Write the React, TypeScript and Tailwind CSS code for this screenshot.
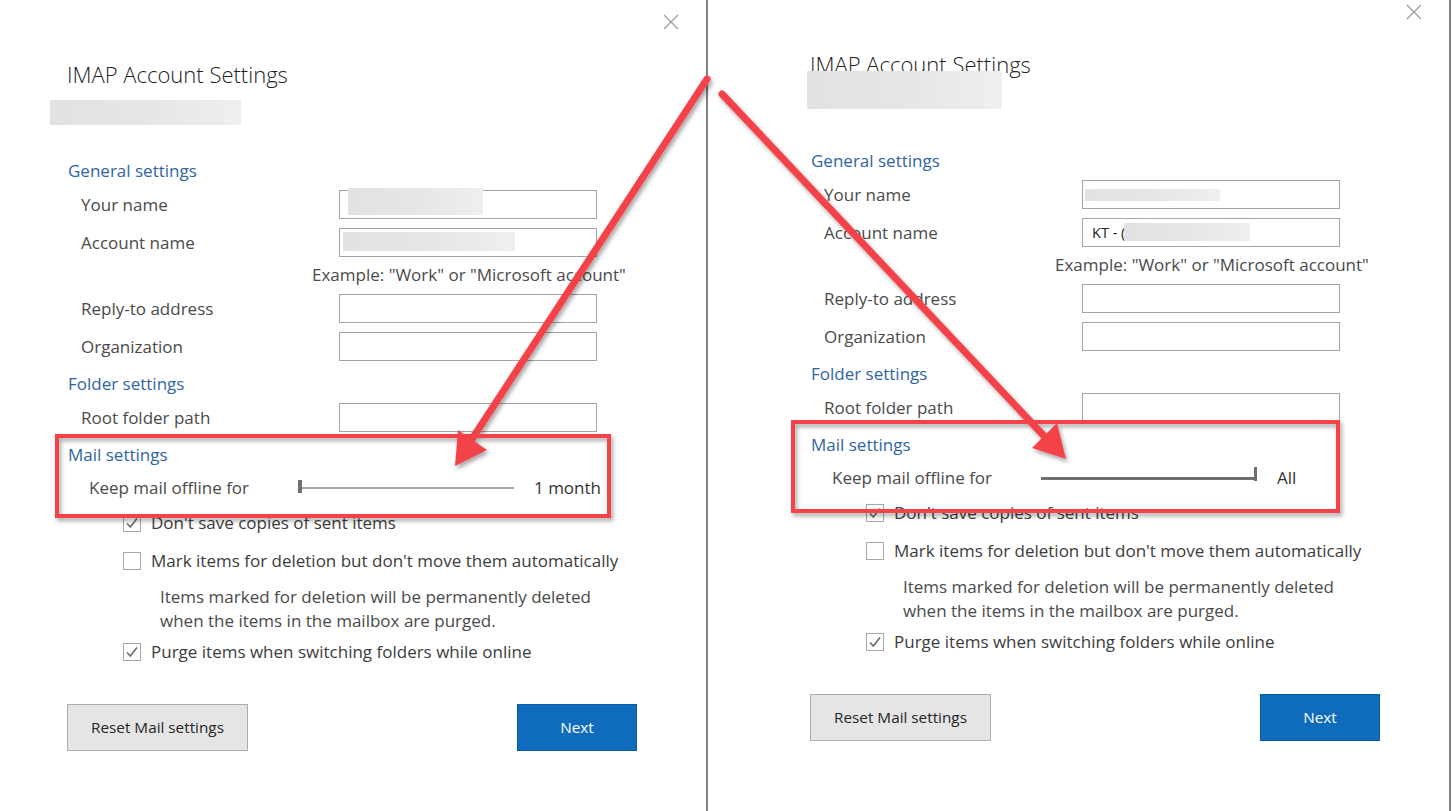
import React from 'react';

type Side = 'left' | 'right';

const Blur = ({ className }: { className: string }) => (
  <div className={`bg-linear-to-r from-[#e2e2e2] via-[#e6e6e6] to-[#efefef] ${className}`} />
);

const Field = ({ label, children }: { label: string; children?: React.ReactNode }) => (
  <div className="flex items-center h-[29px]">
    <span className="w-[339px] pl-[81px] text-[#4a4a4a]">{label}</span>
    <div className="relative w-[258px] h-[29px] border border-[#a5a5a5] bg-white">{children}</div>
  </div>
);

const Check = ({ checked, label }: { checked: boolean; label: string }) => (
  <div className="flex items-center h-[24px] pl-[123px]">
    <div className="w-[18px] h-[18px] border border-[#a8a8a8] bg-white flex items-center justify-center">
      {checked && (
        <svg width="14" height="14" viewBox="0 0 14 14">
          <path d="M2 7.5 L5.3 11 L12 2.5" fill="none" stroke="#6b6b6b" strokeWidth="1.6" />
        </svg>
      )}
    </div>
    <span className="ml-[10px] text-[#3c3c3c]">{label}</span>
  </div>
);

const Dialog = ({ side }: { side: Side }) => {
  const right = side === 'right';
  return (
    <div className={`flex flex-col ${right ? 'pt-[4px]' : 'pt-[14px]'}`}>
      {/* close */}
      <div className="flex justify-end pr-[27px] h-[16px]">
        <svg width="16" height="16" viewBox="0 0 16 16">
          <path d="M1 1 L15 15 M15 1 L1 15" stroke="#9a9a9a" strokeWidth="1.2" />
        </svg>
      </div>

      <div className="mt-[29px] pl-[67px] h-[30px] leading-[30px] text-[22px] font-light text-[#222]">
        IMAP Account Settings
      </div>
      {right ? (
        <Blur className="relative ml-[64px] -mt-[8px] w-[195px] h-[38px]" />
      ) : (
        <Blur className="ml-[50px] mt-[11px] w-[191px] h-[25px]" />
      )}

      <div className={`${right ? 'mt-[40px]' : 'mt-[34px]'} pl-[68px] h-[24px] leading-[24px] text-[#2f64a3]`}>
        General settings
      </div>

      <div className="mt-[7px]">
        <Field label="Your name">
          {right ? (
            <Blur className="absolute left-[2px] top-[8px] w-[135px] h-[12px]" />
          ) : (
            <Blur className="absolute left-[8px] -top-[3px] w-[135px] h-[27px]" />
          )}
        </Field>
      </div>
      <div className="mt-[9px]">
        <Field label="Account name">
          {right ? (
            <>
              <span className="absolute left-[9px] top-[3px] text-[14.5px] text-[#222]">KT - (</span>
              <Blur className="absolute left-[41px] top-[4px] w-[126px] h-[18px]" />
            </>
          ) : (
            <Blur className="absolute left-[3px] top-[3px] w-[172px] h-[19px]" />
          )}
        </Field>
      </div>
      <div className="mt-[6px] h-[24px] leading-[24px] pl-[312px] text-[#4a4a4a]">
        Example: "Work" or "Microsoft account"
      </div>
      <div className="mt-[7px]">
        <Field label="Reply-to address" />
      </div>
      <div className="mt-[9px]">
        <Field label="Organization" />
      </div>

      <div className="mt-[11px] pl-[68px] h-[24px] leading-[24px] text-[#2f64a3]">Folder settings</div>
      <div className="mt-[7px]">
        <Field label="Root folder path" />
      </div>

      <div className="mt-[11px] pl-[68px] h-[24px] leading-[24px] text-[#2f64a3]">Mail settings</div>
      <div className="mt-[9px] flex items-center h-[24px]">
        <span className="w-[298px] pl-[89px] text-[#4a4a4a]">Keep mail offline for</span>
        <div className="relative w-[216px] h-[14px] flex items-center">
          {right ? (
            <>
              <div className="h-[3px] w-full bg-[#6f6f6f]" />
              <div className="absolute right-0 top-[-4px] w-[3px] h-[14px] bg-[#6f6f6f]" />
            </>
          ) : (
            <>
              <div className="h-[2px] w-full bg-[#a9a9a9]" />
              <div className="absolute left-0 top-[-1px] w-[4px] h-[13px] bg-[#707070]" />
            </>
          )}
        </div>
        <span className="ml-[20px] text-[#333]">{right ? 'All' : '1 month'}</span>
      </div>

      <div className="mt-[11px]">
        <Check checked label="Don't save copies of sent items" />
      </div>
      <div className="mt-[14px]">
        <Check checked={false} label="Mark items for deletion but don't move them automatically" />
      </div>
      <div className="mt-[12px] pl-[160px] leading-[24px] text-[#4a4a4a]">
        <div>Items marked for deletion will be permanently deleted</div>
        <div>when the items in the mailbox are purged.</div>
      </div>
      <div className="mt-[7px]">
        <Check checked label="Purge items when switching folders while online" />
      </div>

      <div className="mt-[40px] flex justify-between pl-[67px] pr-[69px]">
        <button className="w-[181px] h-[47px] bg-[#e5e5e5] border border-[#adadad] text-[15.3px] text-[#262626]">
          Reset Mail settings
        </button>
        <button className="w-[120px] h-[47px] bg-[#0f6cbd] border border-[#0b5aa5] text-[15.3px] text-white">
          Next
        </button>
      </div>
    </div>
  );
};

export default function App() {
  return (
    <div className="relative flex w-[1453px] h-[811px] bg-white overflow-hidden font-['Open_Sans',sans-serif] text-[17px]">
      <div className="w-[706px] shrink-0">
        <Dialog side="left" />
      </div>
      <div className="w-[2px] shrink-0 bg-[#7f7f7f]" />
      <div className="w-[741px] shrink-0 pl-[35px]">
        <Dialog side="right" />
      </div>
      <div className="w-[2px] shrink-0 bg-[#7f7f7f]" />
      <div className="flex-1" />

      {/* annotations */}
      <svg className="absolute inset-0 pointer-events-none" width="1453" height="811" viewBox="0 0 1453 811">
        <defs>
          <filter id="sh" x="-10%" y="-10%" width="130%" height="130%">
            <feDropShadow dx="2" dy="3" stdDeviation="2.2" floodColor="#000" floodOpacity="0.35" />
          </filter>
        </defs>
        <g filter="url(#sh)" fill="none" stroke="#f4424a">
          <rect x="57" y="436" width="552" height="80" strokeWidth="4" />
          <rect x="793" y="422" width="545" height="89" strokeWidth="4" />
          <line x1="707" y1="79" x2="472" y2="439" strokeWidth="7" strokeLinecap="round" />
          <line x1="722" y1="94" x2="1045" y2="437" strokeWidth="7" strokeLinecap="round" />
        </g>
        <g filter="url(#sh)" fill="#f4424a">
          <polygon points="455,466 487,450 458,430" />
          <polygon points="1066,459 1032,448 1057,423" />
        </g>
      </svg>
    </div>
  );
}
